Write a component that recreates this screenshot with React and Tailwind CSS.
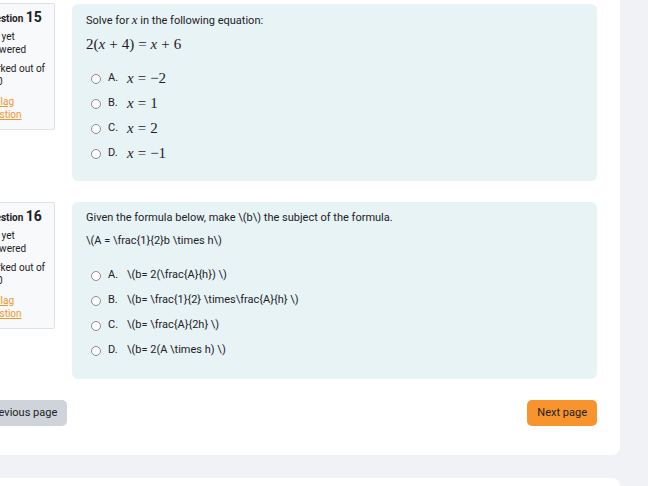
import React from 'react';

const serif = { fontFamily: '"Liberation Serif", "DejaVu Serif", serif' };

function X() {
  return <i className="italic">x</i>;
}

const Op = ({ children }) => <span className="mx-[4px]">{children}</span>;

const q15Options = [
  { key: 'A', math: <><X /><Op>=</Op>−2</> },
  { key: 'B', math: <><X /><Op>=</Op>1</> },
  { key: 'C', math: <><X /><Op>=</Op>2</> },
  { key: 'D', math: <><X /><Op>=</Op>−1</> },
];

const q16Options = [
  { key: 'A', text: '\\(b= 2(\\frac{A}{h}) \\)' },
  { key: 'B', text: '\\(b= \\frac{1}{2} \\times\\frac{A}{h} \\)' },
  { key: 'C', text: '\\(b= \\frac{A}{2h} \\)' },
  { key: 'D', text: '\\(b= 2(A \\times h) \\)' },
];

function InfoBox({ number }) {
  return (
    <div className="ml-[-25px] w-[80px] shrink-0 self-start rounded-[2px] border border-[#dee2e6] bg-[#f8f9fa] px-[7px] pt-[4px] pb-[8px] text-[#1d2125]">
      <h3 className="text-[10px] font-bold leading-[18px]">
        Question <span className="text-[14px]">{number}</span>
      </h3>
      <div className="mt-[3px] text-[10px] leading-[12.5px]">Not yet answered</div>
      <div className="mt-[7px] text-[10px] leading-[12.5px]">Marked out of 1.00</div>
      <a href="#" className="mt-[8px] block text-[10px] leading-[12.5px] text-[#f0962e] underline">
        <span className="inline-block w-[12px]" />
        Flag question
      </a>
    </div>
  );
}

function Radio() {
  return <span className="inline-block h-[10px] w-[10px] rounded-full border border-[#8d8d8d] bg-white" />;
}

function QuestionCard({ title, formula, options }) {
  return (
    <div className="h-[177px] w-[525px] rounded-[6px] bg-[#e7f3f5] px-[14px] pt-[8px] text-[#1d2125]">
      <p className="text-[11px] leading-[16px]">{title}</p>
      <div className="mt-[5px] flex h-[20px] items-center">{formula}</div>
      <div className="mt-[12px] pl-[5px]">
        {options.map((o) => (
          <div key={o.key} className="flex h-[25px] items-center">
            <Radio />
            <span className="ml-[7px] w-[19px] text-[11px]">{o.key}.</span>
            {o.math ? (
              <span className="text-[15px]" style={serif}>{o.math}</span>
            ) : (
              <span className="text-[11px]">{o.text}</span>
            )}
          </div>
        ))}
      </div>
    </div>
  );
}

export default function App() {
  return (
    <div
      className="flex h-[486px] w-[648px] overflow-hidden bg-[#f0f2f5]"
      style={{ fontFamily: 'Roboto, "Liberation Sans", sans-serif' }}
    >
      <div className="flex w-[620px] shrink-0 flex-col">
        <div className="h-[455px] shrink-0 rounded-br-[8px] bg-white">
          <div className="flex gap-[17px] pt-[3px]">
            <InfoBox number={15} />
            <div className="mt-[1px]">
              <QuestionCard
                title={<>Solve for <i style={serif} className="text-[13px]">x</i> in the following equation:</>}
                formula={
                  <span className="text-[15px]" style={serif}>
                    2(<X /><Op>+</Op>4)<Op>=</Op><X /><Op>+</Op>6
                  </span>
                }
                options={q15Options}
              />
            </div>
          </div>
          <div className="mt-[21px] flex gap-[17px]">
            <InfoBox number={16} />
            <QuestionCard
              title="Given the formula below, make \(b\) the subject of the formula."
              formula={<span className="text-[11px]">{'\\(A = \\frac{1}{2}b \\times h\\)'}</span>}
              options={q16Options}
            />
          </div>
          <div className="mt-[21px] flex items-center justify-between pr-[23px]">
            <button className="ml-[-22px] h-[26px] rounded-[5px] bg-[#ced4da] px-[10px] text-[11px] text-[#1d2125]">
              Previous page
            </button>
            <button className="h-[26px] rounded-[5px] bg-[#f7942d] px-[10px] text-[11px] text-[#1d2125]">
              Next page
            </button>
          </div>
        </div>
        <div className="mt-[23px] h-[40px] shrink-0 rounded-tr-[8px] bg-white" />
      </div>
    </div>
  );
}
